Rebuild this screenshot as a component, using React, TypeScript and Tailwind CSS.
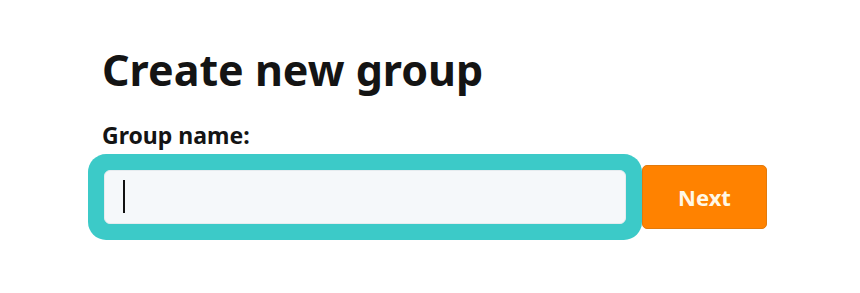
export default function App() {
  return (
    <div className="min-h-screen bg-white pl-[102px] pt-[44px] font-['Noto_Sans',sans-serif] text-[#141414]">
      <h1 className="text-[43px] font-bold leading-[52px]">Create new group</h1>
      <label htmlFor="group-name" className="mt-[24px] block text-[23px] font-bold leading-[30px]">
        Group name:
      </label>
      <div className="mt-[15px] flex items-center gap-4 pl-[2px]">
        <div className="relative">
          <input
            id="group-name"
            type="text"
            className="block h-[54px] w-[522px] rounded-[6px] border border-[#e6ecef] bg-[#f5f8fa] px-[18px] text-[26px] outline-none shadow-[0_0_0_16px_#3ccac8] caret-black"
          />
          <span className="pointer-events-none absolute left-[19px] top-[10px] h-[33px] w-[2px] bg-[#111]" />
        </div>
        <button className="h-[64px] w-[125px] rounded-[5px] border border-[#e27a0c] bg-[#ff8200] text-[22px] font-bold text-[#fff8e6]">
          Next
        </button>
      </div>
    </div>
  );
}
